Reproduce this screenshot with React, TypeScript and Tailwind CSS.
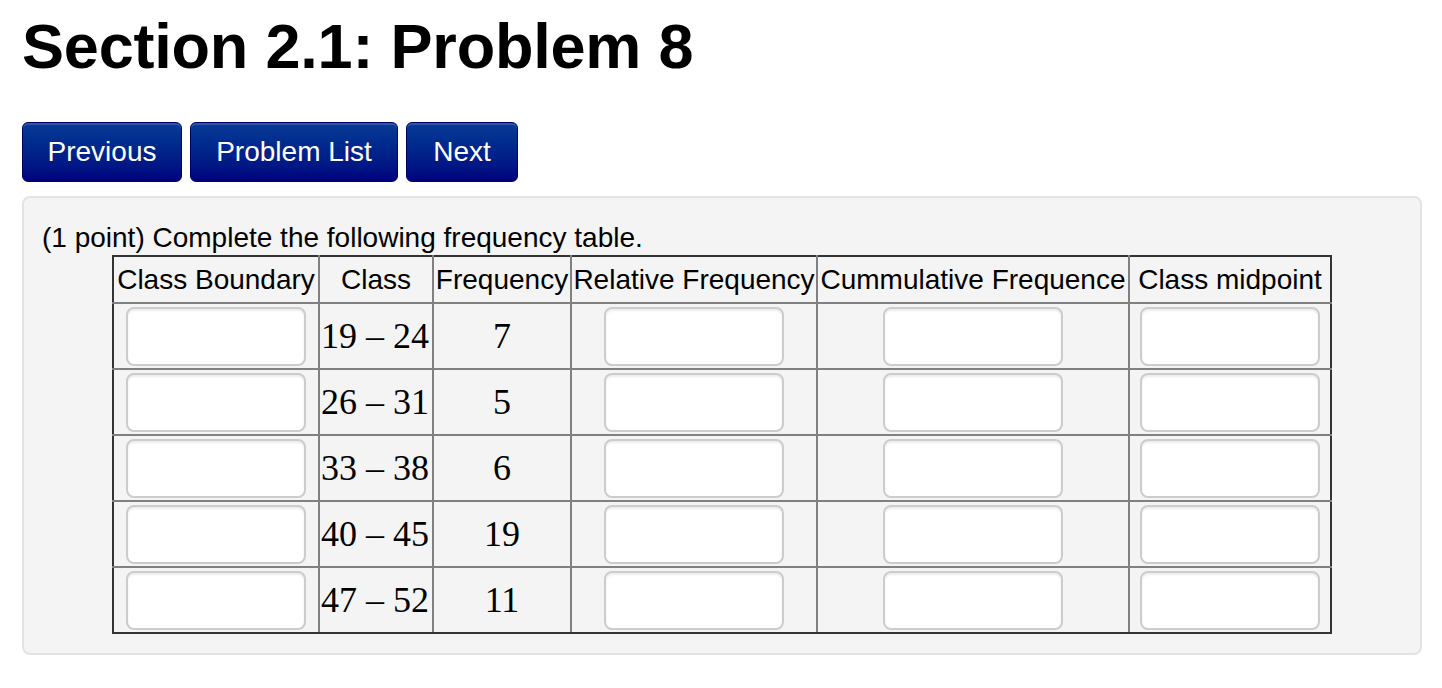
const rows = [
  ['19 – 24', '7'],
  ['26 – 31', '5'],
  ['33 – 38', '6'],
  ['40 – 45', '19'],
  ['47 – 52', '11'],
]

const headers = [
  ['Class Boundary', 'w-[206px]'],
  ['Class', 'w-[114px]'],
  ['Frequency', 'w-[138px]'],
  ['Relative Frequency', 'w-[246px]'],
  ['Cummulative Frequence', 'w-[312px]'],
  ['Class midpoint', 'w-[202px]'],
]

function Box() {
  return (
    <input
      type="text"
      className="block mx-auto w-[180px] h-[59px] rounded-[8px] bg-white border-2 border-[#cccccc] shadow-[inset_0_2px_2px_rgba(0,0,0,0.08)] outline-none"
    />
  )
}

function NavButton({ label, w }: { label: string; w: string }) {
  return (
    <button className={`${w} h-[60px] rounded-[6px] border border-[#00006a] bg-gradient-to-b from-[#0a3a96] to-[#00007e] text-white text-[28px] shadow-[inset_0_2px_0_rgba(255,255,255,0.15)]`}>
      {label}
    </button>
  )
}

export default function App() {
  return (
    <div className="min-h-screen bg-white font-['Liberation_Sans',Arial,sans-serif] text-black px-[22px]">
      <h1 className="pt-[10px] text-[63px] leading-[72px] font-bold tracking-[-0.2px]">Section 2.1: Problem 8</h1>

      <div className="mt-[40px] flex gap-[8px]">
        <NavButton label="Previous" w="w-[160px]" />
        <NavButton label="Problem List" w="w-[208px]" />
        <NavButton label="Next" w="w-[112px]" />
      </div>

      <div className="mt-[14px] w-[1400px] bg-[#f4f4f4] border-2 border-[#e3e3e3] rounded-[8px] pt-[23px] pb-[19px] px-[18px]">
        <p className="text-[28px] leading-[34px]">(1 point) Complete the following frequency table.</p>

        <table className="mx-auto border-collapse">
          <thead>
            <tr className="h-[47px]">
              {headers.map(([h, w], i) => (
                <th
                  key={h}
                  className={`${w} p-0 font-normal text-[28px] leading-[32px] whitespace-nowrap text-center border-2 border-[#808080] ${i === 0 ? 'border-l-[#333333]' : ''} ${i === 5 ? 'border-r-[#333333]' : ''} border-t-[#333333]`}
                >
                  {h}
                </th>
              ))}
            </tr>
          </thead>
          <tbody>
            {rows.map(([cls, freq], r) => {
              const last = r === rows.length - 1
              const b = `border-2 border-[#808080] ${last ? 'border-b-[#333333]' : ''}`
              return (
                <tr key={cls} className="h-[66px]">
                  <td className={`${b} border-l-[#333333] p-0`}><Box /></td>
                  <td className={`${b} p-0 pl-[1px] text-left whitespace-nowrap font-['Liberation_Serif','Times_New_Roman',serif] text-[36px] leading-[40px]`}>{cls}</td>
                  <td className={`${b} p-0 text-center font-['Liberation_Serif','Times_New_Roman',serif] text-[36px] leading-[40px]`}>{freq}</td>
                  <td className={`${b} p-0`}><Box /></td>
                  <td className={`${b} p-0`}><Box /></td>
                  <td className={`${b} border-r-[#333333] p-0`}><Box /></td>
                </tr>
              )
            })}
          </tbody>
        </table>
      </div>
    </div>
  )
}
